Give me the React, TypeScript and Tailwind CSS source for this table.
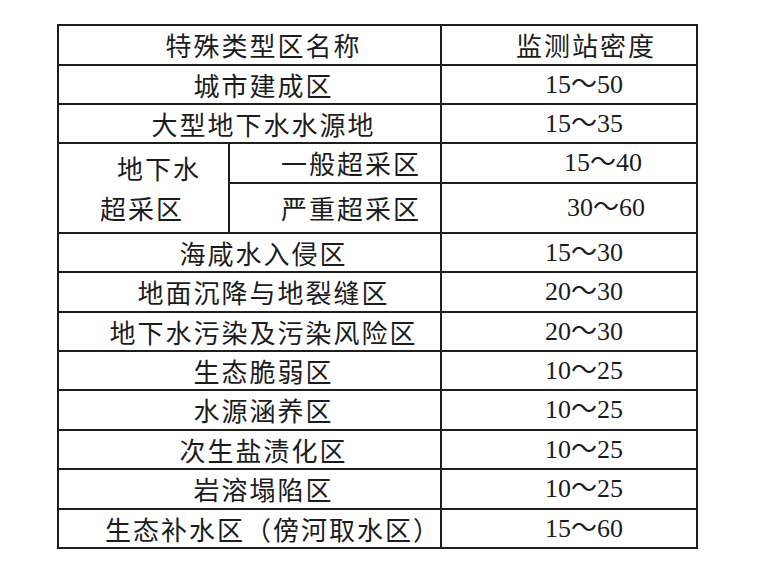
const cjk = "font-['Noto_Sans_CJK_SC','Noto_Sans',sans-serif]";
const num = "font-['Liberation_Serif','Noto_Sans_CJK_SC',serif]";

const rows: { name: string; range: string; h: string; pad?: string }[] = [
  { name: '海咸水入侵区', range: '15～30', h: 'h-[37px]' },
  { name: '地面沉降与地裂缝区', range: '20～30', h: 'h-[38px]' },
  { name: '地下水污染及污染风险区', range: '20～30', h: 'h-[37px]' },
  { name: '生态脆弱区', range: '10～25', h: 'h-[37px]' },
  { name: '水源涵养区', range: '10～25', h: 'h-[38px]' },
  { name: '次生盐渍化区', range: '10～25', h: 'h-[37px]' },
  { name: '岩溶塌陷区', range: '10～25', h: 'h-[38px]' },
  { name: '生态补水区（傍河取水区）', range: '15～60', h: 'h-[37px]', pad: 'pl-[46px]' },
];

function NameCell({ text, h, pad = 'pl-[28px]' }: { text: string; h: string; pad?: string }) {
  return (
    <div className={`col-span-2 ${h} bg-white flex items-center justify-center ${pad} ${cjk} text-[26px] tracking-[2px] leading-none text-[#1c1c1c]`}>
      {text}
    </div>
  );
}

function RangeCell({ text, h, pad = 'pl-[30px]' }: { text: string; h: string; pad?: string }) {
  return (
    <div className={`${h} bg-white flex items-center justify-center ${pad} ${num} text-[26px] leading-none text-[#1c1c1c]`}>
      {text}
    </div>
  );
}

export default function App() {
  return (
    <div className="w-[760px] h-[570px] bg-white overflow-hidden">
      <div className="ml-[57px] mt-[24px] w-fit grid grid-cols-[169px_210px_254px] gap-[2px] p-[2px] bg-[#1e1e1e]">
        <NameCell text="特殊类型区名称" h="h-[38px]" />
        <div className={`h-[38px] bg-white flex items-center justify-center pl-[34px] ${cjk} text-[26px] tracking-[2px] leading-none text-[#1c1c1c]`}>
          监测站密度
        </div>

        <NameCell text="城市建成区" h="h-[37px]" />
        <RangeCell text="15～50" h="h-[37px]" />

        <NameCell text="大型地下水水源地" h="h-[37px]" />
        <RangeCell text="15～35" h="h-[37px]" />

        {/* merged cell */}
        <div className={`row-span-2 bg-white flex flex-col justify-center gap-[14px] ${cjk} text-[26px] tracking-[2px] leading-none text-[#1c1c1c]`}>
          <span className="ml-[58px]">地下水</span>
          <span className="ml-[41px]">超采区</span>
        </div>
        <div className={`h-[38px] bg-white flex items-center justify-end pr-[19px] ${cjk} text-[26px] tracking-[2px] leading-none text-[#1c1c1c]`}>
          一般超采区
        </div>
        <RangeCell text="15～40" h="h-[38px]" pad="pl-[68px]" />
        <div className={`h-[48px] bg-white flex items-center justify-end pr-[19px] ${cjk} text-[26px] tracking-[2px] leading-none text-[#1c1c1c]`}>
          严重超采区
        </div>
        <RangeCell text="30～60" h="h-[48px]" pad="pl-[74px]" />

        {rows.map((r) => (
          <div key={r.name} className="contents">
            <NameCell text={r.name} h={r.h} pad={r.pad} />
            <RangeCell text={r.range} h={r.h} />
          </div>
        ))}
      </div>
    </div>
  );
}
